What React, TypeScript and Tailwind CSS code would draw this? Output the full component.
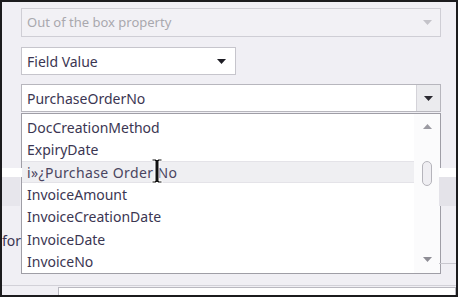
import { useState } from "react";

const items = [
  "DocCreationMethod",
  "ExpiryDate",
  "i»¿Purchase Order No",
  "InvoiceAmount",
  "InvoiceCreationDate",
  "InvoiceDate",
  "InvoiceNo",
];

function Caret({ className }: { className: string }) {
  return (
    <svg width="9" height="5" viewBox="0 0 9 5" className={className}>
      <path d="M0 0h9L4.5 5z" fill="currentColor" />
    </svg>
  );
}

export default function App() {
  const [hover] = useState(2);

  return (
    <div
      className="relative w-[458px] h-[297px] overflow-hidden border-2 border-[#1b1b1d] bg-[#f0eff4] text-[14px] text-[#3b3652]"
      style={{ fontFamily: '"Noto Sans", "Open Sans", sans-serif' }}
    >
      {/* background form pieces peeking out behind the open list */}
      <div className="absolute left-0 top-[166px] w-[20px] h-[9px] bg-white" />
      <div className="absolute left-0 top-[175px] w-[18px] h-[29px] bg-[#e7e6ec]" />
      <div className="absolute left-0 top-[229px] text-[#3b3652] leading-[20px]">for</div>
      <div className="absolute right-0 top-[166px] w-[17px] h-[9px] bg-white" />
      <div className="absolute right-0 top-[175px] w-[17px] h-[29px] bg-[#e4e3e9]" />
      <div className="absolute right-0 top-[261px] w-[17px] h-px bg-[#c9c8cf]" />
      <div className="absolute left-0 right-0 top-[283px] h-px bg-[#d2d1d8]" />
      <div className="absolute left-[56px] right-0 top-[285px] h-[12px] bg-white border border-[#b9b8c0]" />

      <div className="flex flex-col pl-[19px] pr-[16px] pt-[6px]">
        {/* disabled combo */}
        <div className="flex items-center h-[29px] w-[420px] border border-[#cfced5] bg-[#f2f1f5] pl-[5px] pr-[8px]">
          <span className="flex-1 text-[13px] text-[#a9a8ae]">Out of the box property</span>
          <Caret className="text-[#c4c3c9]" />
        </div>

        {/* field value */}
        <div className="mt-[10px] flex items-center h-[28px] w-[215px] border border-[#c6c5cc] bg-white pl-[5px] pr-[9px]">
          <span className="flex-1">Field Value</span>
          <Caret className="text-[#1e1d24]" />
        </div>

        {/* purchase order combo */}
        <div className="mt-[9px] flex h-[28px] w-[420px] border border-[#b7b6bd] bg-white">
          <span className="flex-1 flex items-center pl-[5px]">PurchaseOrderNo</span>
          <div className="w-[24px] flex items-center justify-center bg-[#ebebee] border-l border-[#d4d3d9]">
            <Caret className="text-[#2a2930]" />
          </div>
        </div>

        {/* dropdown list */}
        <div className="mt-[1px] flex h-[161px] w-[420px] border border-[#9f9ea6] bg-white">
          <div className="flex-1 flex flex-col pt-[2px]">
            {items.map((it, i) => (
              <div
                key={it}
                className={
                  "h-[22.5px] flex items-center pl-[5px] " +
                  (i === hover ? "bg-[#efeff2] border-y border-[#e4e3e8] text-[#4a4560] tracking-[0.4px]" : "")
                }
              >
                {it}
              </div>
            ))}
          </div>
          <div className="w-[26px] flex flex-col items-center pt-[10px] pb-[11px] bg-[#fbfbfc]">
            <Caret className="text-[#9b9aa2] rotate-180" />
            <div className="mt-[32px] w-[10px] h-[25px] rounded-[5px] border border-[#b5b4bb] bg-[#efeef2]" />
            <div className="flex-1" />
            <Caret className="text-[#8e8d95]" />
          </div>
        </div>
      </div>

      {/* I-beam mouse cursor */}
      <svg className="absolute left-[148px] top-[156px]" width="14" height="26" viewBox="0 0 14 26">
        <path
          d="M2 1h4l1 1 1-1h4v2H9v20h3v2H8l-1-1-1 1H2v-2h3V3H2z"
          fill="#111"
          stroke="#fff"
          strokeWidth="1"
        />
      </svg>
    </div>
  );
}
